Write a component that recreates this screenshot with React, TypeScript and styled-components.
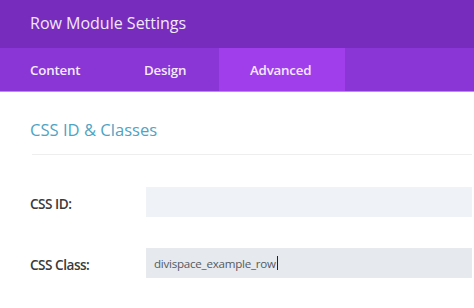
import React, { FC } from 'react'
import styled, { createGlobalStyle } from 'styled-components'

const Global = createGlobalStyle`
  html, body {
    margin: 0;
    padding: 0;
    background: #fff;
    font-family: 'Open Sans', 'Noto Sans', sans-serif;
  }
`

type Field = { label: string; value: string; filled?: boolean }

const fields: Field[] = [
  { label: 'CSS ID:', value: '' },
  { label: 'CSS Class:', value: 'divispace_example_row', filled: true },
]

const tabs = [
  { name: 'Content', width: 114 },
  { name: 'Design', width: 105 },
  { name: 'Advanced', width: 126 },
]

export default function App() {
  return (
    <Panel>
      <Global />
      <Header>
        <Title>Row Module Settings</Title>
      </Header>
      <TabBar>
        {tabs.map((t) => (
          <Tab key={t.name} width={t.width} active={t.name === 'Advanced'}>
            {t.name}
          </Tab>
        ))}
      </TabBar>
      <Body>
        <SectionTitle>CSS ID &amp; Classes</SectionTitle>
        <Divider />
        <Fields>
          {fields.map((f) => (
            <FieldRow key={f.label} {...f} />
          ))}
        </Fields>
      </Body>
    </Panel>
  )
}

const FieldRow: FC<Field> = ({ label, value, filled }) => (
  <Row>
    <Label>{label}</Label>
    <Input filled={filled}>
      {value}
      {filled && <Caret />}
    </Input>
  </Row>
)

const Panel = styled.div`
  width: 474px;
  height: 308px;
  overflow: hidden;
  background: #fff;
`

const Header = styled.div`
  height: 48px;
  background: #782cbd;
  display: flex;
  align-items: center;
  padding-left: 30px;
`

const Title = styled.h1`
  margin: 0 0 2px;
  font-size: 16px;
  font-weight: 400;
  color: #f1e8fa;
`

const TabBar = styled.div`
  display: flex;
  height: 43px;
  background: #8a35d5;
  border-bottom: 1px solid #b98fe6;
`

const Tab = styled.div<{ active?: boolean; width: number }>`
  box-sizing: border-box;
  width: ${({ width }) => width}px;
  display: flex;
  align-items: center;
  padding-left: 30px;
  font-size: 13.3px;
  font-weight: 600;
  letter-spacing: -0.2px;
  color: #f4eafc;
  background: ${({ active }) => (active ? '#a03eec' : 'transparent')};
  &:nth-child(3) {
    padding-left: 31px;
  }
`

const Body = styled.div`
  padding: 25px 2px 0 30px;
`

const SectionTitle = styled.h2`
  margin: 0;
  font-size: 16.6px;
  font-weight: 400;
  color: #4fa3c4;
  line-height: 26px;
`

const Divider = styled.div`
  height: 1px;
  background: #eeeeef;
  margin: 11px 0 0 2px;
`

const Fields = styled.div`
  display: flex;
  flex-direction: column;
  gap: 31px;
  padding-top: 32px;
`

const Row = styled.div`
  display: flex;
  align-items: center;
`

const Label = styled.div`
  width: 116px;
  flex-shrink: 0;
  font-size: 13.6px;
  font-weight: 600;
  letter-spacing: -0.5px;
  color: #3a3a3a;
  padding-top: 3px;
`

const Input = styled.div<{ filled?: boolean }>`
  flex: 1;
  height: 30px;
  display: flex;
  align-items: center;
  padding-left: 8px;
  font-size: 11.6px;
  letter-spacing: -0.25px;
  color: #555a5f;
  background: ${({ filled }) => (filled ? '#e6e9ed' : '#eff2f6')};
`

const Caret = styled.span`
  display: inline-block;
  width: 1px;
  height: 14px;
  background: #222;
  margin-left: 1px;
`
